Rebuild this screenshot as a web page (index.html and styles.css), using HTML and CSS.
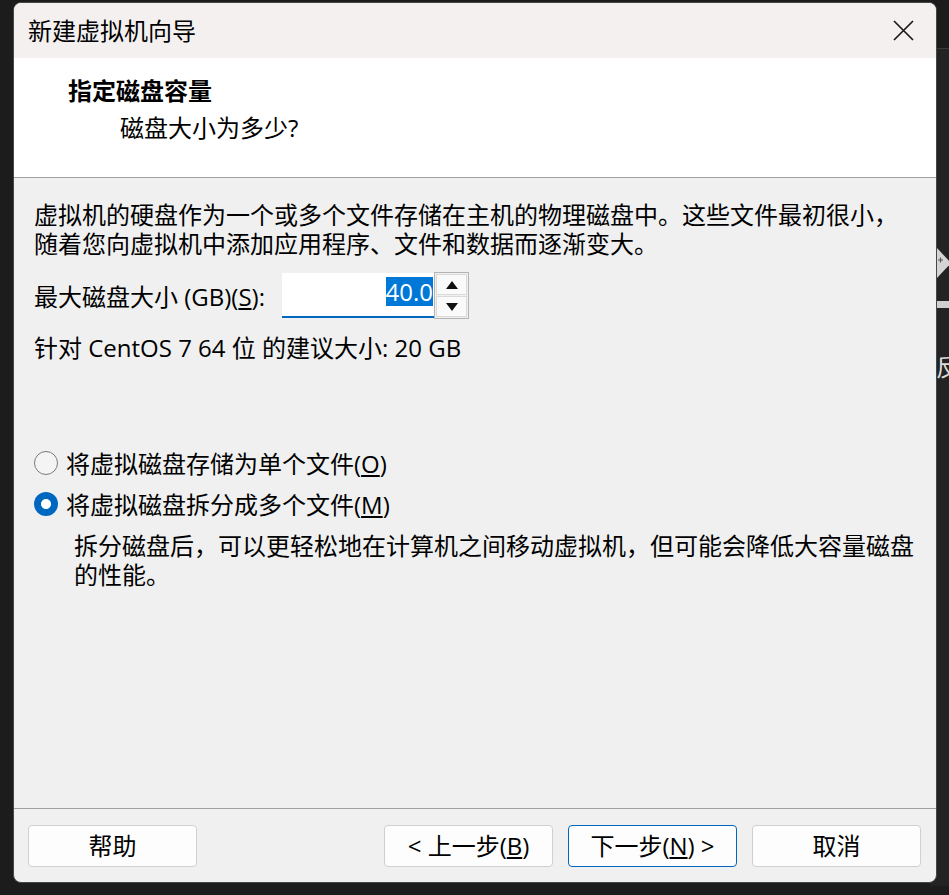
FILE: index.html
```html
<!DOCTYPE html>
<html lang="zh-CN">
<head>
<meta charset="utf-8">
<title>新建虚拟机向导</title>
<link rel="stylesheet" href="styles.css">
</head>
<body>
<div class="desk">
  <div class="bgwin">
    <svg class="bg-arrow" width="14" height="30" viewBox="0 0 14 30"><polygon points="0,0 14,15 0,30" fill="#d4d4d4"/><path d="M1 12 H6 M3.5 9.5 V14.5" stroke="#555" stroke-width="1.2"/></svg>
    <div class="bg-bar"></div>
    <div class="bg-char">反</div>
  </div>
  <div class="win">
    <div class="titlebar">
      <span class="title">新建虚拟机向导</span>
      <svg class="close" width="21" height="21" viewBox="0 0 21 21"><path d="M1 1 L20 20 M20 1 L1 20" stroke="#1a1a1a" stroke-width="1.7" fill="none"/></svg>
    </div>
    <div class="head">
      <div class="h1">指定磁盘容量</div>
      <div class="h2">磁盘大小为多少?</div>
    </div>
    <div class="content">
      <p class="intro">虚拟机的硬盘作为一个或多个文件存储在主机的物理磁盘中。这些文件最初很小，<br>随着您向虚拟机中添加应用程序、文件和数据而逐渐变大。</p>
      <div class="size-row">
        <label class="size-label">最大磁盘大小 (GB)(<u>S</u>):</label>
        <div class="field"><span class="sel">40.0</span></div>
        <div class="spinner">
          <span class="sb"><svg width="12" height="8" viewBox="0 0 12 8"><polygon points="6,0 12,8 0,8" fill="#111"/></svg></span>
          <span class="sb"><svg width="12" height="8" viewBox="0 0 12 8"><polygon points="0,0 12,0 6,8" fill="#111"/></svg></span>
        </div>
      </div>
      <p class="rec">针对 CentOS 7 64 位 的建议大小: 20 GB</p>
      <div class="options">
        <div class="opt"><span class="radio"></span><span>将虚拟磁盘存储为单个文件(<u>O</u>)</span></div>
        <div class="opt"><span class="radio on"></span><span>将虚拟磁盘拆分成多个文件(<u>M</u>)</span></div>
        <p class="desc">拆分磁盘后，可以更轻松地在计算机之间移动虚拟机，但可能会降低大容量磁盘<br>的性能。</p>
      </div>
    </div>
    <div class="footer">
      <button class="btn">帮助</button>
      <div class="nav">
        <button class="btn">&lt; 上一步(<u>B</u>)</button>
        <button class="btn primary">下一步(<u>N</u>) &gt;</button>
        <button class="btn">取消</button>
      </div>
    </div>
  </div>
</div>
</body>
</html>
```
FILE: styles.css
```css
* { box-sizing: border-box; }
html, body { margin: 0; padding: 0; }
body {
  background: #1c1c1c;
  font-family: "Segoe UI", "Open Sans", "Noto Sans CJK SC", sans-serif;
  font-size: 24px;
  color: #000;
}
.desk {
  position: relative;
  width: 949px;
  height: 895px;
  overflow: hidden;
}
.bgwin {
  position: absolute;
  left: 930px;
  top: 48px;
  width: 40px;
  height: 838px;
  background: #232323;
  border-top: 1px solid #3a3a3a;
}
.bg-arrow { position: absolute; left: 7px; top: 199px; }
.bg-bar { position: absolute; left: 7px; top: 252px; width: 20px; height: 7px; background: #cfcfcf; }
.bg-char { position: absolute; left: 6px; top: 300px; color: #dcdcdc; font-size: 24px; line-height: 36px; }

.win {
  position: absolute;
  left: 13px;
  top: 2px;
  width: 924px;
  height: 881px;
  border: 1px solid #474747;
  border-radius: 8px;
  overflow: hidden;
  display: flex;
  flex-direction: column;
  background: #f0f0f0;
}
.titlebar {
  height: 55px;
  flex: none;
  background: #f3f0ef;
  display: flex;
  align-items: center;
  justify-content: space-between;
  padding: 0 22px 0 14px;
}
.title { line-height: 30px; }
.close { display: block; }

.head {
  flex: none;
  height: 120px;
  background: #fff;
  border-bottom: 1px solid #a0a0a0;
  padding: 14px 0 0 54px;
}
.h1 { font-weight: 700; line-height: 37px; }
.h2 { line-height: 37px; padding-left: 52px; }

.content {
  flex: 1;
  border-bottom: 1px solid #a0a0a0;
  padding: 22px 0 0 20px;
}
.intro { margin: 0; line-height: 29px; white-space: nowrap; }
.size-row {
  margin-top: 14px;
  display: flex;
  align-items: center;
  height: 47px;
}
.size-label { width: 248px; flex: none; white-space: nowrap; }
.field {
  width: 152px;
  height: 45px;
  background: #fff;
  border-bottom: 2px solid #0067c0;
  text-align: right;
  padding: 2px 1px 0 0;
}
.sel {
  display: inline-block;
  background: #0078d7;
  color: #fff;
  line-height: 29px;
}
.spinner {
  width: 35px;
  height: 47px;
  border: 1px solid #b4b4b4;
  background: #f0f0f0;
  padding: 1px;
  display: flex;
  flex-direction: column;
  gap: 1px;
}
.sb {
  flex: 1;
  background: #fafafa;
  border: 1px solid #dadada;
  display: flex;
  align-items: center;
  justify-content: center;
}
.sb svg { display: block; }
.rec { margin: 14px 0 0; line-height: 29px; }
.options { margin-top: 80px; }
.opt {
  height: 41px;
  display: flex;
  align-items: center;
  gap: 8px;
}
.radio {
  width: 24px;
  height: 24px;
  border-radius: 50%;
  border: 1.5px solid #7a7a7a;
  background: #f4f4f4;
  flex: none;
}
.radio.on {
  border: none;
  background: radial-gradient(circle, #fff 0 4.6px, #0067c0 5.4px);
}
.desc { margin: 7px 0 0; padding-left: 40px; line-height: 29px; white-space: nowrap; }

.footer {
  flex: none;
  display: flex;
  align-items: flex-start;
  padding: 16px 15px 0 14px;
  height: 73px;
}
.nav { margin-left: auto; display: flex; gap: 15px; }
.btn {
  width: 169px;
  height: 42px;
  border: 1px solid #d0d0d0;
  border-radius: 4px;
  background: #fdfdfd;
  font: inherit;
  color: #000;
  line-height: 38px;
  padding: 0;
}
.btn.primary { border-color: #0067c0; }
```
